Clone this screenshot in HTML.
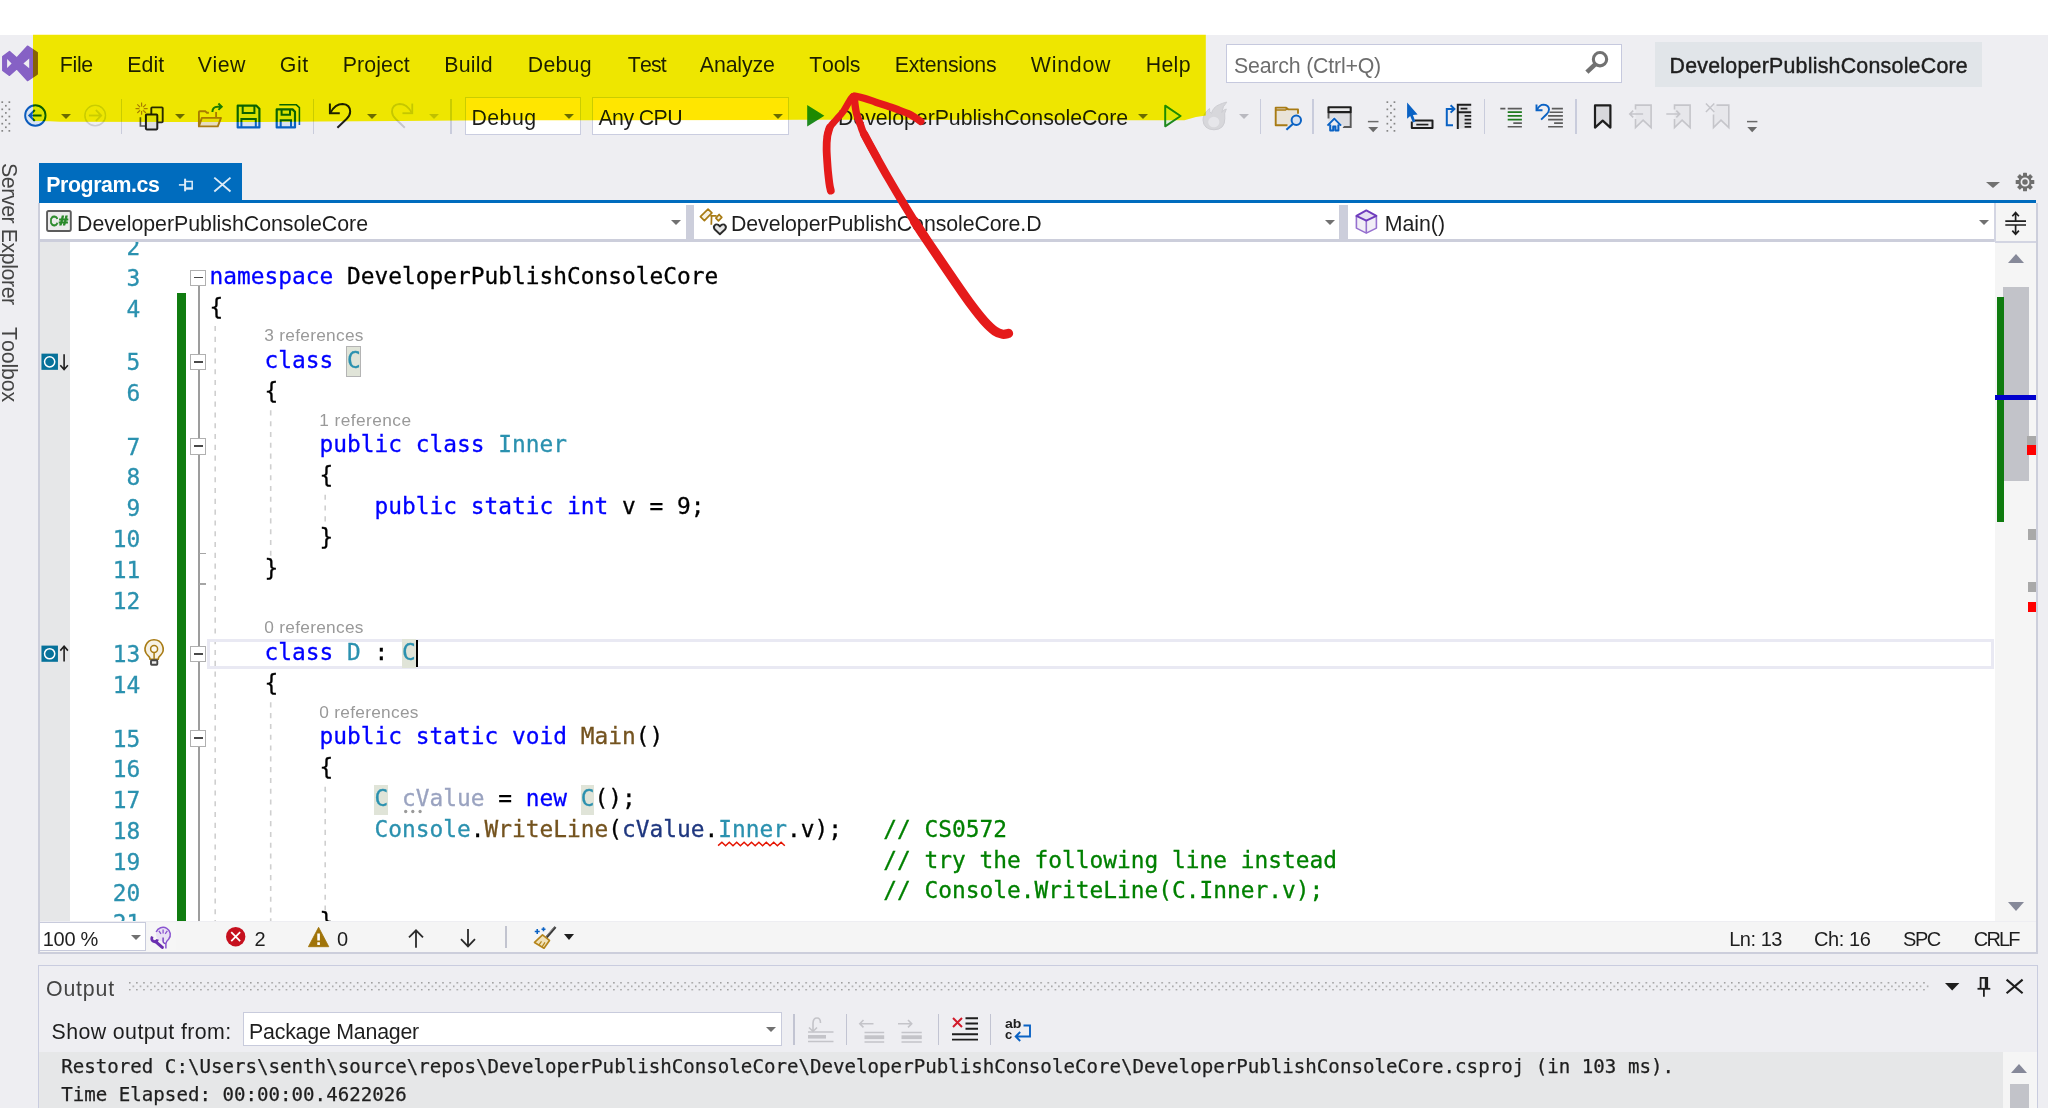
<!DOCTYPE html>
<html lang="en"><head><meta charset="utf-8"><title>Program.cs - DeveloperPublishConsoleCore</title>
<style>
html,body{margin:0;padding:0}
body{width:2048px;height:1108px;position:relative;overflow:hidden;background:#eeeef2;font-family:"Liberation Sans",Arial,sans-serif;font-kerning:none}
.a{position:absolute}
.t{position:absolute;line-height:0;height:0;white-space:pre;font-family:"Liberation Sans",Arial,sans-serif}
svg{position:absolute;overflow:visible}
.sep{position:absolute;width:1.3px;background:#c9cbd6}
.arr{position:absolute;width:0;height:0;border-left:5px solid transparent;border-right:5px solid transparent;border-top:5.5px solid #717171}
.combo{position:absolute;background:#fff;border:1.7px solid #cacde0;box-sizing:border-box}

</style></head>
<body>
<header class="shell">
<div class="a" style="left:0.00px;top:0.00px;width:2048.00px;height:34.70px;background:#fff;"></div>
<div class="a" style="left:0;top:35px;width:2048px;height:58px">
</div>
<svg style="left:0;top:0" width="60" height="100"><path d="M27.5 46.2 L37.2 52.7 V74.1 L27.5 80.5 L16.8 68.7 L9.5 75.3 L2.8 70.4 V56.6 L9.5 51.5 L16.8 58.1 Z" fill="#8661c5" stroke="#8661c5" stroke-width="1.5" stroke-linejoin="round"/><path d="M7.1 58.9 V68 L11.6 63.5 Z M29.2 58.4 L23.4 63.5 L29.2 68.2 Z" fill="#eeeef2"/></svg>
<div class="t" style="left:59.80px;top:64.60px;font-size:21.33px;color:#1e1e1e;letter-spacing:-0.344px;">File</div>
<div class="t" style="left:127.30px;top:64.60px;font-size:21.33px;color:#1e1e1e;letter-spacing:0.059px;">Edit</div>
<div class="t" style="left:197.80px;top:64.60px;font-size:21.33px;color:#1e1e1e;letter-spacing:0.441px;">View</div>
<div class="t" style="left:279.80px;top:64.60px;font-size:21.33px;color:#1e1e1e;letter-spacing:0.578px;">Git</div>
<div class="t" style="left:342.80px;top:64.60px;font-size:21.33px;color:#1e1e1e;letter-spacing:0.087px;">Project</div>
<div class="t" style="left:444.30px;top:64.60px;font-size:21.33px;color:#1e1e1e;letter-spacing:0.212px;">Build</div>
<div class="t" style="left:527.80px;top:64.60px;font-size:21.33px;color:#1e1e1e;letter-spacing:0.228px;">Debug</div>
<div class="t" style="left:627.80px;top:64.60px;font-size:21.33px;color:#1e1e1e;letter-spacing:-0.871px;">Test</div>
<div class="t" style="left:699.80px;top:64.60px;font-size:21.33px;color:#1e1e1e;letter-spacing:-0.127px;">Analyze</div>
<div class="t" style="left:809.30px;top:64.60px;font-size:21.33px;color:#1e1e1e;letter-spacing:-0.231px;">Tools</div>
<div class="t" style="left:894.80px;top:64.60px;font-size:21.33px;color:#1e1e1e;letter-spacing:-0.284px;">Extensions</div>
<div class="t" style="left:1030.80px;top:64.60px;font-size:21.33px;color:#1e1e1e;letter-spacing:0.773px;">Window</div>
<div class="t" style="left:1145.80px;top:64.60px;font-size:21.33px;color:#1e1e1e;letter-spacing:0.281px;">Help</div>
<div class="combo" style="left:1226px;top:44.2px;width:396px;height:39px;border-width:1.3px;border-color:#c6c9de"></div>
<div class="t" style="left:1234.00px;top:65.60px;font-size:21.33px;color:#6d6d6d;letter-spacing:-0.195px;">Search (Ctrl+Q)</div>
<svg style="left:0;top:0" width="2048" height="95"><circle cx="1600" cy="59.2" r="6.65" fill="none" stroke="#717171" stroke-width="3.1"/><path d="M1595.4 64.2 L1586.9 72.2" stroke="#717171" stroke-width="4.6"/></svg>
<div class="a" style="left:1655.00px;top:42.20px;width:326.50px;height:44.40px;background:#e1e5e9;"></div>
<div class="t" style="left:1669.50px;top:65.90px;font-size:21.33px;color:#1e1e1e;letter-spacing:0.253px;-webkit-text-stroke:0.45px #1e1e1e;">DeveloperPublishConsoleCore</div>
<svg style="left:0;top:0" width="2048" height="140"><g fill="#858585"><rect x="1.40" y="101.30" width="1.7" height="1.7"/><rect x="8.50" y="101.30" width="1.7" height="1.7"/><rect x="5.00" y="104.89" width="1.7" height="1.7"/><rect x="1.40" y="108.48" width="1.7" height="1.7"/><rect x="8.50" y="108.48" width="1.7" height="1.7"/><rect x="5.00" y="112.07" width="1.7" height="1.7"/><rect x="1.40" y="115.66" width="1.7" height="1.7"/><rect x="8.50" y="115.66" width="1.7" height="1.7"/><rect x="5.00" y="119.25" width="1.7" height="1.7"/><rect x="1.40" y="122.84" width="1.7" height="1.7"/><rect x="8.50" y="122.84" width="1.7" height="1.7"/><rect x="5.00" y="126.43" width="1.7" height="1.7"/><rect x="1.40" y="130.02" width="1.7" height="1.7"/><rect x="8.50" y="130.02" width="1.7" height="1.7"/></g><circle cx="35.35" cy="115.5" r="10.2" fill="#d9e3f2" stroke="#0a5bbd" stroke-width="1.9"/><path d="M41.6 115.5 H29.6 M34.8 110 L29.3 115.5 L34.8 121" fill="none" stroke="#0a5bbd" stroke-width="2"/><circle cx="95.2" cy="115.5" r="10.3" fill="none" stroke="#cbcbd0" stroke-width="1.6"/><path d="M88.8 115.5 H101 M95.8 110 L101.3 115.5 L95.8 121" fill="none" stroke="#cbcbd0" stroke-width="1.8"/><rect x="151.3" y="107.4" width="11.4" height="15" rx="0.8" fill="#e9e9ec" stroke="#2a2a2a" stroke-width="1.9"/><path d="M140.4 117.2 V126 H145.5" fill="none" stroke="#5a5a5a" stroke-width="1.7"/><rect x="145.9" y="114.4" width="11.4" height="15" rx="0.8" fill="#dedee2" stroke="#1e1e1e" stroke-width="2"/><path d="M141.6 102.6 V114.8 M135.5 108.7 H147.7 M137.3 104.4 L145.9 113 M145.9 104.4 L137.3 113" stroke="#a87b14" stroke-width="1.25"/><circle cx="141.6" cy="108.7" r="2.3" fill="#eee600"/><path d="M198.9 126 V112.2 Q198.9 111.3 199.8 111.3 H205.3 L206.9 112.7 H208.9" fill="none" stroke="#a87b14" stroke-width="1.9"/><path d="M216.1 112 V117.6" fill="none" stroke="#a87b14" stroke-width="1.9"/><path d="M198.9 126.4 L201.8 117.9 H221 L217.8 126.4 Z" fill="#e6dcc0" stroke="#a87b14" stroke-width="1.9" stroke-linejoin="round"/><path d="M212.4 112 Q212.4 106.8 217.5 106.7 H221 M218.4 103.6 L221.7 106.7 L218.4 109.9" fill="none" stroke="#1e7a1e" stroke-width="2"/><path d="M237.7 105.7 H256.4 L259.4 108.7 V127.4 H237.7 Z" fill="#d8e2f1" stroke="#0a62c4" stroke-width="2.2" stroke-linejoin="round"/><path d="M242.7 105.7 V113.1 H254.4 V105.7" fill="none" stroke="#0a62c4" stroke-width="2"/><path d="M241.4 127.4 V118.9 H255.8 V127.4" fill="none" stroke="#0a62c4" stroke-width="2"/><path d="M279.3 104.8 H296.4 L299.4 107.6 V125" fill="none" stroke="#0a62c4" stroke-width="1.6"/><path d="M276.7 109.4 H292.6 L295 111.8 V127.4 H276.7 Z" fill="#d8e2f1" stroke="#0a62c4" stroke-width="2.2" stroke-linejoin="round"/><path d="M281.6 109.4 V114.8 H290 V109.4" fill="none" stroke="#0a62c4" stroke-width="2"/><path d="M280.7 127.4 V120.3 H291 V127.4" fill="none" stroke="#0a62c4" stroke-width="2"/><path d="M329.9 103.5 V113.3 H339.8" fill="none" stroke="#1e1e1e" stroke-width="2"/><path d="M330.6 112.6 Q335 104 342.6 104 Q350.2 104.6 350.2 111.6 Q350.2 115.5 346.5 119 L337.4 127.7" fill="none" stroke="#1e1e1e" stroke-width="2"/><path d="M412.3 103.5 V113.3 H402.4" fill="none" stroke="#c6c6cb" stroke-width="1.9"/><path d="M411.6 112.6 Q407.2 104 399.6 104 Q392 104.6 392 111.6 Q392 115.5 395.7 119 L404.8 127.7" fill="none" stroke="#c6c6cb" stroke-width="1.9"/><path d="M807.2 105 L824.4 115.7 L807.2 126.4 Z" fill="#1e8a1e"/><path d="M1165.2 105.7 L1180.6 116 L1165.2 126.3 Z" fill="#ddeedd" stroke="#1e8a1e" stroke-width="2" stroke-linejoin="round"/><path d="M1219.5 104.5 Q1226.5 101.8 1226.8 102.2 Q1222.5 106 1221.8 112.5 Q1223.5 109.5 1226.3 109 Q1223.8 113 1224.8 118.5 Q1225 129.5 1214 129.8 Q1203.5 129.5 1203 120 Q1203 113.5 1209.5 108.5 Q1209 112.5 1211.5 113.5 Q1212.5 107.5 1219.5 104.5 Z" fill="#d7d7db" stroke="#cdcdd2" stroke-width="1"/><ellipse cx="1213.8" cy="122" rx="5.6" ry="5.2" fill="#e6e6ea"/><path d="M1275.7 107.6 H1286 L1288.2 109.4 H1298 V125.2 H1275.7 Z" fill="#e9e3d8"/><path d="M1287.5 125.2 H1275.7 V107.6 H1285.7 L1288.3 109.4 H1298 V113.8" fill="none" stroke="#a87b14" stroke-width="1.9" stroke-linejoin="round"/><path d="M1276 110 H1285.5 L1287.7 108.4" fill="none" stroke="#a87b14" stroke-width="1.3"/><circle cx="1296.3" cy="120.3" r="4.7" fill="#d8e2f1" stroke="#0a62c4" stroke-width="2"/><path d="M1292.8 123.9 L1286.4 129.8" stroke="#0a62c4" stroke-width="2.1"/><rect x="1328.5" y="107.3" width="22.2" height="19" fill="#dedee2"/><rect x="1328.5" y="107.3" width="22.2" height="4.8" fill="#e8e8ea"/><path d="M1328.5 118.5 V112 M1350.7 112 V127 H1342.8" fill="none" stroke="#5a5a5a" stroke-width="1.9"/><path d="M1328.5 112.1 V107.3 H1350.7 V112.1 Z" fill="none" stroke="#1e1e1e" stroke-width="2.1" stroke-linejoin="round"/><path d="M1326.2 126.2 L1334.3 117.6 L1342.4 126.2 L1340.3 127.5 V131.6 H1328.3 V127.5 Z" fill="#eeeef2" stroke="#eeeef2" stroke-width="2"/><path d="M1330.2 125 V130.4 H1338.4 V125 Z" fill="#d8e2f1"/><path d="M1327.5 125.6 L1334.3 118.6 L1341.1 125.6 M1330.2 124.5 V130.4 H1333.2 V126.6 H1335.4 V130.4 H1338.4 V124.5" fill="none" stroke="#0a62c4" stroke-width="2" stroke-linejoin="round"/><path d="M1367.9 121.6 H1378.5" stroke="#6a6a6a" stroke-width="1.5"/><path d="M1368.2 127 H1378.2 L1373.2 132.3 Z" fill="#6a6a6a"/><g fill="#858585"><rect x="1386.50" y="101.30" width="1.7" height="1.7"/><rect x="1393.60" y="101.30" width="1.7" height="1.7"/><rect x="1390.10" y="104.89" width="1.7" height="1.7"/><rect x="1386.50" y="108.48" width="1.7" height="1.7"/><rect x="1393.60" y="108.48" width="1.7" height="1.7"/><rect x="1390.10" y="112.07" width="1.7" height="1.7"/><rect x="1386.50" y="115.66" width="1.7" height="1.7"/><rect x="1393.60" y="115.66" width="1.7" height="1.7"/><rect x="1390.10" y="119.25" width="1.7" height="1.7"/><rect x="1386.50" y="122.84" width="1.7" height="1.7"/><rect x="1393.60" y="122.84" width="1.7" height="1.7"/><rect x="1390.10" y="126.43" width="1.7" height="1.7"/><rect x="1386.50" y="130.02" width="1.7" height="1.7"/><rect x="1393.60" y="130.02" width="1.7" height="1.7"/></g><path d="M1414.5 120.5 H1432.5 V127.9 H1411.8 V121.5" fill="#e4e4e8" stroke="#1e1e1e" stroke-width="2" stroke-linejoin="round"/><path d="M1416.3 124.6 H1428.4" stroke="#1e1e1e" stroke-width="1.7"/><path d="M1407.1 102.6 L1417.6 114.6 L1412.9 114.9 L1415.4 121.6 L1412.9 122.6 L1410.2 116 L1407.1 118.8 Z" fill="#0a62c4"/><rect x="1459" y="105" width="12.2" height="23.5" fill="#dddde0"/><path d="M1453 125.2 H1446.8 V108.9 H1453.6 M1450.6 105.2 L1454.4 108.9 L1450.6 112.6" fill="none" stroke="#0a62c4" stroke-width="2"/><path d="M1457.8 129 V104.8 H1471.2 M1457.8 112.2 H1471.2" fill="none" stroke="#1e1e1e" stroke-width="2"/><path d="M1460.6 108.6 H1467.4 M1464.6 115.9 H1471.2 M1464.6 119.6 H1471.2 M1464.6 123.3 H1471.2 M1464.6 126.8 H1471.2" stroke="#1e1e1e" stroke-width="1.7"/><path d="M1500.3 108.6 H1505.4 M1507.7 108.6 H1521.9 M1513.3 123.1 H1521.9 M1507.7 126.8 H1521.9" stroke="#5c5c5c" stroke-width="1.6"/><path d="M1507.7 112.2 H1521.9 M1507.7 115.9 H1521.9 M1507.7 119.6 H1521.9" stroke="#1e7a1e" stroke-width="1.7"/><path d="M1551.8 108.6 H1562.9 M1549.5 112.2 H1562.9 M1548.1 115.9 H1562.9 M1548.1 119.6 H1562.9 M1554.1 123.1 H1562.9 M1548.1 126.8 H1562.9" stroke="#5c5c5c" stroke-width="1.6"/><path d="M1536.5 104.4 V110.3 H1542.5" fill="none" stroke="#0a62c4" stroke-width="1.9"/><path d="M1537 109.8 Q1539.5 104.6 1543.6 104.6 Q1549 105 1549 109.6 Q1549 112 1546.6 114.3 L1541.1 119.6" fill="none" stroke="#0a62c4" stroke-width="1.9"/><path d="M1595 105.4 H1610.4 V127.6 L1602.7 120.6 L1595 127.6 Z" fill="#d8d8dc" stroke="#1e1e1e" stroke-width="2.2" stroke-linejoin="round"/><path d="M1635.5 105.1 H1651.1 V127.6 L1643.1 120.2 L1635.5 127.6 Z" fill="#e7e7eb"/><path d="M1635.5 109.4 V105.1 H1651.1 V127.6 L1643.1 120.2 L1635.5 127.6 V119" fill="none" stroke="#c5c5ca" stroke-width="1.6"/><path d="M1643.1 114 H1630 M1633.2 110.6 L1629.8 114 L1633.2 117.4" fill="none" stroke="#c5c5ca" stroke-width="1.6"/><path d="M1674.5 105.1 H1690.1 V127.6 L1682.1 120.2 L1674.5 127.6 Z" fill="#e7e7eb"/><path d="M1674.5 109.4 V105.1 H1690.1 V127.6 L1682.1 120.2 L1674.5 127.6 V119" fill="none" stroke="#c5c5ca" stroke-width="1.6"/><path d="M1666.3 114 H1679.5 M1676.3 110.6 L1679.7 114 L1676.3 117.4" fill="none" stroke="#c5c5ca" stroke-width="1.6"/><path d="M1713.5 105.1 H1728.8 V127.6 L1721 120.2 L1713.5 127.6 Z" fill="#e7e7eb"/><path d="M1716.5 105.1 H1728.8 V127.6 L1721 120.2 L1713.5 127.6 V114.5" fill="none" stroke="#c5c5ca" stroke-width="1.6"/><path d="M1705.9 103.5 L1714.3 112 M1714.3 103.5 L1705.9 112" fill="none" stroke="#c5c5ca" stroke-width="1.5"/><path d="M1747.0 121.6 H1757.4" stroke="#6a6a6a" stroke-width="1.5"/><path d="M1747.3 127 H1757.1 L1752.2 132.3 Z" fill="#6a6a6a"/></svg>
<div class="sep" style="left:120.95px;top:98.90px;height:34.80px;background:#c9ccdc"></div>
<div class="sep" style="left:312.75px;top:98.90px;height:34.80px;background:#c9ccdc"></div>
<div class="sep" style="left:450.25px;top:98.90px;height:34.80px;background:#c9ccdc"></div>
<div class="sep" style="left:1259.65px;top:98.90px;height:34.80px;background:#c9ccdc"></div>
<div class="sep" style="left:1312.25px;top:98.90px;height:34.80px;background:#c9ccdc"></div>
<div class="sep" style="left:1483.65px;top:98.90px;height:34.80px;background:#c9ccdc"></div>
<div class="sep" style="left:1575.25px;top:98.90px;height:34.80px;background:#c9ccdc"></div>
<div class="combo" style="left:464.5px;top:97px;width:116px;height:37.5px"></div>
<div class="t" style="left:471.50px;top:117.60px;font-size:21.33px;color:#1e1e1e;letter-spacing:0.428px;">Debug</div>
<div class="combo" style="left:592px;top:97px;width:197px;height:37.5px"></div>
<div class="t" style="left:598.50px;top:117.60px;font-size:21.33px;color:#1e1e1e;letter-spacing:-0.603px;">Any CPU</div>
<div class="t" style="left:838.00px;top:117.60px;font-size:21.33px;color:#1e1e1e;letter-spacing:-0.061px;">DeveloperPublishConsoleCore</div>
<div class="arr" style="left:61.00px;top:114.10px;border-top-color:#6b6b6b;border-left-width:5.00px;border-right-width:5.00px;border-top-width:5.00px"></div>
<div class="arr" style="left:175.00px;top:114.10px;border-top-color:#6b6b6b;border-left-width:5.00px;border-right-width:5.00px;border-top-width:5.00px"></div>
<div class="arr" style="left:367.30px;top:114.10px;border-top-color:#6b6b6b;border-left-width:5.00px;border-right-width:5.00px;border-top-width:5.00px"></div>
<div class="arr" style="left:429.00px;top:114.10px;border-top-color:#c0c0c6;border-left-width:5.00px;border-right-width:5.00px;border-top-width:5.00px"></div>
<div class="arr" style="left:564.00px;top:114.10px;border-top-color:#6b6b6b;border-left-width:5.00px;border-right-width:5.00px;border-top-width:5.00px"></div>
<div class="arr" style="left:773.00px;top:114.10px;border-top-color:#6b6b6b;border-left-width:5.00px;border-right-width:5.00px;border-top-width:5.00px"></div>
<div class="arr" style="left:1138.00px;top:114.10px;border-top-color:#6b6b6b;border-left-width:5.00px;border-right-width:5.00px;border-top-width:5.00px"></div>
<div class="arr" style="left:1239.00px;top:114.10px;border-top-color:#b9b9c0;border-left-width:5.00px;border-right-width:5.00px;border-top-width:5.00px"></div>
<div class="t" style="left:9.40px;top:-7.40px;font-size:21.33px;color:#444;letter-spacing:-0.425px;top:163.20px;transform-origin:0 0;transform:rotate(90deg);">Server Explorer</div>
<div class="t" style="left:9.40px;top:-7.40px;font-size:21.33px;color:#444;letter-spacing:-0.099px;top:327.30px;transform-origin:0 0;transform:rotate(90deg);">Toolbox</div>
<div class="a" style="left:39.00px;top:163.00px;width:203.00px;height:40.00px;background:#006cbe;"></div>
<div class="a" style="left:39.00px;top:199.50px;width:1996.90px;height:3.80px;background:#006cbe;"></div>
<div class="t" style="left:46.30px;top:184.60px;font-size:21.33px;color:#fff;letter-spacing:-0.416px;font-weight:700;">Program.cs</div>
<svg style="left:0;top:0" width="300" height="210"><g fill="none" stroke="#dcebf7"><path d="M178.9 184.9 H185" stroke-width="1.6"/><path d="M185.1 178.7 V191.3" stroke-width="2"/><path d="M185.5 181.5 H192.2 V188.4 H185.5" stroke-width="1.5"/><path d="M185.5 188.5 H192.9" stroke-width="2.3"/><path d="M214.3 177.6 L230.5 191.5 M230.5 177.6 L214.3 191.5" stroke-width="1.9"/></g></svg>
<div class="arr" style="left:1985.70px;top:182.00px;border-top-color:#717171;border-left-width:7.25px;border-right-width:7.25px;border-top-width:6.60px"></div>
<svg style="left:2025.2px;top:181.9px" width="1" height="1" viewBox="0 0 1 1"><rect x="-2" y="-9.3" width="4" height="4.5" rx="0.6" transform="rotate(0)" fill="#6e6e6e"/><rect x="-2" y="-9.3" width="4" height="4.5" rx="0.6" transform="rotate(45)" fill="#6e6e6e"/><rect x="-2" y="-9.3" width="4" height="4.5" rx="0.6" transform="rotate(90)" fill="#6e6e6e"/><rect x="-2" y="-9.3" width="4" height="4.5" rx="0.6" transform="rotate(135)" fill="#6e6e6e"/><rect x="-2" y="-9.3" width="4" height="4.5" rx="0.6" transform="rotate(180)" fill="#6e6e6e"/><rect x="-2" y="-9.3" width="4" height="4.5" rx="0.6" transform="rotate(225)" fill="#6e6e6e"/><rect x="-2" y="-9.3" width="4" height="4.5" rx="0.6" transform="rotate(270)" fill="#6e6e6e"/><rect x="-2" y="-9.3" width="4" height="4.5" rx="0.6" transform="rotate(315)" fill="#6e6e6e"/><circle r="6.7" fill="#6e6e6e"/><circle r="3.6" fill="none" stroke="#eeeef2" stroke-width="1.7"/></svg>
<div class="a" style="left:37.50px;top:203.30px;width:2000.50px;height:38.60px;background:#cccedb;"></div>
<div class="a" style="left:39.80px;top:203.30px;width:1953.80px;height:35.60px;background:#fff;"></div>
<div class="a" style="left:685.50px;top:204.60px;width:8.30px;height:34.30px;background:#cccedb;"></div>
<div class="a" style="left:1339.10px;top:204.60px;width:8.50px;height:34.30px;background:#cccedb;"></div>
<div class="a" style="left:1993.60px;top:203.30px;width:44.40px;height:39.60px;background:#d3d5e2;"></div>
<div class="a" style="left:1996.40px;top:203.30px;width:40.10px;height:37.90px;background:#f5f5f5;"></div>
<svg style="left:0;top:0" width="2048" height="245"><rect x="47.05" y="210.95" width="23.75" height="20" rx="1.6" fill="#ebebeb" stroke="#5c5c5c" stroke-width="1.9"/><text x="49.7" y="226.2" font-family="Liberation Sans, Arial, sans-serif" font-size="14.4" fill="#2a8a2a" stroke="#2a8a2a" stroke-width="0.8" textLength="8.4" lengthAdjust="spacingAndGlyphs">C</text><text x="59" y="224.5" font-family="Liberation Sans, Arial, sans-serif" font-weight="700" font-size="13" fill="#2a8a2a" stroke="#2a8a2a" stroke-width="0.9" textLength="9" lengthAdjust="spacingAndGlyphs">#</text><path d="M708.05 209.2 L711.9 212.9 L704.4 220.6 L700.4 216.7 Z" fill="#f6f1e2" stroke="#a87b14" stroke-width="1.7" stroke-linejoin="round"/><path d="M710.3 215.8 H716.6 M711.6 215.8 L711.3 224.8" fill="none" stroke="#a87b14" stroke-width="1.7"/><path d="M719.1 214.5 L721.8 217.4 L718.5 220.8 L715.9 218.1 Z" fill="#f6f1e2" stroke="#a87b14" stroke-width="1.7" stroke-linejoin="round"/><path d="M719.9 234.2 L714.6 229.3 Q712.8 226.3 715.3 224.7 Q717.9 223.6 719.9 226.4 Q721.9 223.6 724.5 224.7 Q727 226.3 725.2 229.3 Z" fill="#e6e6e6" stroke="#2b2b2b" stroke-width="1.9" stroke-linejoin="round"/><path d="M1366.3 210.4 L1376.4 215.8 L1366.3 220.6 L1356.4 215.8 Z" fill="#e6dff2"/><path d="M1356.4 215.8 L1366.3 220.6 L1376.4 215.8 V228.1 L1366.3 233.1 L1356.4 228.1 Z" fill="#f1eef6"/><path d="M1356.4 215.8 V228.1 L1366.3 233.1 L1376.4 228.1 V215.8 M1366.3 220.6 V233.1" fill="none" stroke="#9670cf" stroke-width="1.6" stroke-linejoin="round"/><path d="M1366.3 210.4 L1376.4 215.8 L1366.3 220.6 L1356.4 215.8 Z" fill="none" stroke="#6f3cbd" stroke-width="1.9" stroke-linejoin="round"/></svg>
<div class="t" style="left:77.00px;top:223.60px;font-size:21.33px;color:#1e1e1e;letter-spacing:-0.024px;">DeveloperPublishConsoleCore</div>
<div class="arr" style="left:671.00px;top:220.00px;border-top-color:#717171;border-left-width:5.00px;border-right-width:5.00px;border-top-width:5.50px"></div>
<div class="t" style="left:731.00px;top:223.60px;font-size:21.33px;color:#1e1e1e;letter-spacing:-0.086px;">DeveloperPublishConsoleCore.D</div>
<div class="arr" style="left:1325.00px;top:220.00px;border-top-color:#717171;border-left-width:5.00px;border-right-width:5.00px;border-top-width:5.50px"></div>
<div class="t" style="left:1384.70px;top:223.60px;font-size:21.33px;color:#1e1e1e;letter-spacing:-0.023px;">Main()</div>
<div class="arr" style="left:1979.00px;top:220.00px;border-top-color:#717171;border-left-width:5.00px;border-right-width:5.00px;border-top-width:5.50px"></div>
<svg style="left:0;top:0" width="2048" height="245"><g fill="none" stroke="#1e1e1e" stroke-width="1.7"><path d="M2005.3 221.1 H2026 M2005.3 225 H2026"/><path d="M2015.6 221 V212.8 M2012.3 216.2 L2015.6 212.6 L2018.9 216.2 M2015.6 225 V234 M2012.3 230.6 L2015.6 234.2 L2018.9 230.6"/></g></svg>
</header>
<main class="doc">
<div class="a" style="left:37.50px;top:241.00px;width:2.00px;height:712.75px;background:#cccedb;"></div>
<div class="a" style="left:2036.00px;top:203.00px;width:2.00px;height:750.75px;background:#cccedb;"></div>
<div class="a" id="editor" style="left:39.50px;top:241.90px;width:1955.00px;height:679.60px;background:#fff;overflow:hidden">
<div class="a" style="left:-39.50px;top:-241.90px;width:2048px;height:1108px">
<div class="a" style="left:39.50px;top:241.00px;width:30.00px;height:681.00px;background:#e6e7e8;"></div>
<div class="a" style="left:176.70px;top:292.50px;width:9.20px;height:629.50px;background:#107c10;"></div>
<div class="t" style="left:126.45px;top:247.07px;font-size:22.84px;color:#2b91af;font-family:'DejaVu Sans Mono', 'Liberation Mono', monospace;-webkit-text-stroke:0.3px;">2</div>
<div class="t" style="left:126.45px;top:277.89px;font-size:22.84px;color:#2b91af;font-family:'DejaVu Sans Mono', 'Liberation Mono', monospace;-webkit-text-stroke:0.3px;">3</div>
<div class="t" style="left:126.45px;top:308.71px;font-size:22.84px;color:#2b91af;font-family:'DejaVu Sans Mono', 'Liberation Mono', monospace;-webkit-text-stroke:0.3px;">4</div>
<div class="t" style="left:126.45px;top:362.23px;font-size:22.84px;color:#2b91af;font-family:'DejaVu Sans Mono', 'Liberation Mono', monospace;-webkit-text-stroke:0.3px;">5</div>
<div class="t" style="left:126.45px;top:393.05px;font-size:22.84px;color:#2b91af;font-family:'DejaVu Sans Mono', 'Liberation Mono', monospace;-webkit-text-stroke:0.3px;">6</div>
<div class="t" style="left:126.45px;top:446.57px;font-size:22.84px;color:#2b91af;font-family:'DejaVu Sans Mono', 'Liberation Mono', monospace;-webkit-text-stroke:0.3px;">7</div>
<div class="t" style="left:126.45px;top:477.39px;font-size:22.84px;color:#2b91af;font-family:'DejaVu Sans Mono', 'Liberation Mono', monospace;-webkit-text-stroke:0.3px;">8</div>
<div class="t" style="left:126.45px;top:508.21px;font-size:22.84px;color:#2b91af;font-family:'DejaVu Sans Mono', 'Liberation Mono', monospace;-webkit-text-stroke:0.3px;">9</div>
<div class="t" style="left:112.70px;top:539.03px;font-size:22.84px;color:#2b91af;font-family:'DejaVu Sans Mono', 'Liberation Mono', monospace;-webkit-text-stroke:0.3px;">10</div>
<div class="t" style="left:112.70px;top:569.85px;font-size:22.84px;color:#2b91af;font-family:'DejaVu Sans Mono', 'Liberation Mono', monospace;-webkit-text-stroke:0.3px;">11</div>
<div class="t" style="left:112.70px;top:600.67px;font-size:22.84px;color:#2b91af;font-family:'DejaVu Sans Mono', 'Liberation Mono', monospace;-webkit-text-stroke:0.3px;">12</div>
<div class="t" style="left:112.70px;top:654.19px;font-size:22.84px;color:#2b91af;font-family:'DejaVu Sans Mono', 'Liberation Mono', monospace;-webkit-text-stroke:0.3px;">13</div>
<div class="t" style="left:112.70px;top:685.01px;font-size:22.84px;color:#2b91af;font-family:'DejaVu Sans Mono', 'Liberation Mono', monospace;-webkit-text-stroke:0.3px;">14</div>
<div class="t" style="left:112.70px;top:738.53px;font-size:22.84px;color:#2b91af;font-family:'DejaVu Sans Mono', 'Liberation Mono', monospace;-webkit-text-stroke:0.3px;">15</div>
<div class="t" style="left:112.70px;top:769.35px;font-size:22.84px;color:#2b91af;font-family:'DejaVu Sans Mono', 'Liberation Mono', monospace;-webkit-text-stroke:0.3px;">16</div>
<div class="t" style="left:112.70px;top:800.17px;font-size:22.84px;color:#2b91af;font-family:'DejaVu Sans Mono', 'Liberation Mono', monospace;-webkit-text-stroke:0.3px;">17</div>
<div class="t" style="left:112.70px;top:830.99px;font-size:22.84px;color:#2b91af;font-family:'DejaVu Sans Mono', 'Liberation Mono', monospace;-webkit-text-stroke:0.3px;">18</div>
<div class="t" style="left:112.70px;top:861.81px;font-size:22.84px;color:#2b91af;font-family:'DejaVu Sans Mono', 'Liberation Mono', monospace;-webkit-text-stroke:0.3px;">19</div>
<div class="t" style="left:112.70px;top:892.63px;font-size:22.84px;color:#2b91af;font-family:'DejaVu Sans Mono', 'Liberation Mono', monospace;-webkit-text-stroke:0.3px;">20</div>
<div class="t" style="left:112.70px;top:923.45px;font-size:22.84px;color:#2b91af;font-family:'DejaVu Sans Mono', 'Liberation Mono', monospace;-webkit-text-stroke:0.3px;">21</div>
<div class="a" style="left:198.15px;top:285.60px;width:1.50px;height:636.40px;background:#9d9d9d;"></div>
<div class="a" style="left:190.3px;top:269.50px;width:16.2px;height:16.4px;box-sizing:border-box;border:1.4px solid #b0b0b0;background:#fff"></div>
<div class="a" style="left:194.20px;top:276.70px;width:8.80px;height:1.70px;background:#4a4a4a;"></div>
<div class="a" style="left:190.3px;top:353.84px;width:16.2px;height:16.4px;box-sizing:border-box;border:1.4px solid #b0b0b0;background:#fff"></div>
<div class="a" style="left:194.20px;top:361.04px;width:8.80px;height:1.70px;background:#4a4a4a;"></div>
<div class="a" style="left:190.3px;top:438.18px;width:16.2px;height:16.4px;box-sizing:border-box;border:1.4px solid #b0b0b0;background:#fff"></div>
<div class="a" style="left:194.20px;top:445.38px;width:8.80px;height:1.70px;background:#4a4a4a;"></div>
<div class="a" style="left:190.3px;top:645.80px;width:16.2px;height:16.4px;box-sizing:border-box;border:1.4px solid #b0b0b0;background:#fff"></div>
<div class="a" style="left:194.20px;top:653.00px;width:8.80px;height:1.70px;background:#4a4a4a;"></div>
<div class="a" style="left:190.3px;top:730.14px;width:16.2px;height:16.4px;box-sizing:border-box;border:1.4px solid #b0b0b0;background:#fff"></div>
<div class="a" style="left:194.20px;top:737.34px;width:8.80px;height:1.70px;background:#4a4a4a;"></div>
<div class="a" style="left:198.90px;top:552.54px;width:7.60px;height:1.40px;background:#a5a5a5;"></div>
<div class="a" style="left:198.90px;top:583.36px;width:7.60px;height:1.40px;background:#a5a5a5;"></div>
<div class="a" style="left:198.90px;top:936.96px;width:7.60px;height:1.40px;background:#a5a5a5;"></div>
<svg style="left:0;top:0" width="2048" height="1108"><path d="M215.20 326.02 V925.00" stroke="#cfcfcf" stroke-width="1.6" stroke-dasharray="5.1 5.7" fill="none"/></svg>
<svg style="left:0;top:0" width="2048" height="1108"><path d="M270.70 410.36 V556.56" stroke="#cfcfcf" stroke-width="1.6" stroke-dasharray="5.1 5.7" fill="none"/></svg>
<svg style="left:0;top:0" width="2048" height="1108"><path d="M270.70 702.32 V925.00" stroke="#cfcfcf" stroke-width="1.6" stroke-dasharray="5.1 5.7" fill="none"/></svg>
<svg style="left:0;top:0" width="2048" height="1108"><path d="M325.20 494.70 V525.74" stroke="#cfcfcf" stroke-width="1.6" stroke-dasharray="5.1 5.7" fill="none"/></svg>
<svg style="left:0;top:0" width="2048" height="1108"><path d="M325.20 786.66 V910.16" stroke="#cfcfcf" stroke-width="1.6" stroke-dasharray="5.1 5.7" fill="none"/></svg>
<div class="a" style="left:206.6px;top:638.5px;width:1787.70px;height:30.3px;box-sizing:border-box;border:3.2px solid #e9e9f3"></div>
<div class="a" style="left:346.30px;top:346.34px;width:14.95px;height:31px;box-sizing:border-box;background:#e0e4d8;border:1.3px solid #b4b4b4"></div>
<div class="a" style="left:401.90px;top:638.90px;width:13.75px;height:29.50px;background:#e0e4d8;"></div>
<div class="a" style="left:374.40px;top:784.88px;width:13.75px;height:29.80px;background:#e0e4d8;"></div>
<div class="a" style="left:580.65px;top:784.88px;width:13.75px;height:29.80px;background:#e0e4d8;"></div>
<div class="t" style="left:209.60px;top:275.69px;font-size:22.84px;color:#000;letter-spacing:0.006px;font-family:'DejaVu Sans Mono', 'Liberation Mono', monospace;-webkit-text-stroke:0.3px;"><span style="color:#0000ff">namespace</span> DeveloperPublishConsoleCore</div>
<div class="t" style="left:209.60px;top:306.51px;font-size:22.84px;color:#000;letter-spacing:0.000px;font-family:'DejaVu Sans Mono', 'Liberation Mono', monospace;-webkit-text-stroke:0.3px;">{</div>
<div class="t" style="left:264.60px;top:360.03px;font-size:22.84px;color:#000;letter-spacing:0.004px;font-family:'DejaVu Sans Mono', 'Liberation Mono', monospace;-webkit-text-stroke:0.3px;"><span style="color:#0000ff">class</span> <span style="color:#2b91af">C</span></div>
<div class="t" style="left:264.60px;top:390.85px;font-size:22.84px;color:#000;letter-spacing:0.000px;font-family:'DejaVu Sans Mono', 'Liberation Mono', monospace;-webkit-text-stroke:0.3px;">{</div>
<div class="t" style="left:319.60px;top:444.37px;font-size:22.84px;color:#000;letter-spacing:0.005px;font-family:'DejaVu Sans Mono', 'Liberation Mono', monospace;-webkit-text-stroke:0.3px;"><span style="color:#0000ff">public</span> <span style="color:#0000ff">class</span> <span style="color:#2b91af">Inner</span></div>
<div class="t" style="left:319.60px;top:475.19px;font-size:22.84px;color:#000;letter-spacing:0.000px;font-family:'DejaVu Sans Mono', 'Liberation Mono', monospace;-webkit-text-stroke:0.3px;">{</div>
<div class="t" style="left:374.60px;top:506.01px;font-size:22.84px;color:#000;letter-spacing:0.005px;font-family:'DejaVu Sans Mono', 'Liberation Mono', monospace;-webkit-text-stroke:0.3px;"><span style="color:#0000ff">public</span> <span style="color:#0000ff">static</span> <span style="color:#0000ff">int</span> v = 9;</div>
<div class="t" style="left:319.60px;top:536.83px;font-size:22.84px;color:#000;letter-spacing:0.000px;font-family:'DejaVu Sans Mono', 'Liberation Mono', monospace;-webkit-text-stroke:0.3px;">}</div>
<div class="t" style="left:264.60px;top:567.65px;font-size:22.84px;color:#000;letter-spacing:0.000px;font-family:'DejaVu Sans Mono', 'Liberation Mono', monospace;-webkit-text-stroke:0.3px;">}</div>
<div class="t" style="left:264.60px;top:651.99px;font-size:22.84px;color:#000;letter-spacing:0.004px;font-family:'DejaVu Sans Mono', 'Liberation Mono', monospace;-webkit-text-stroke:0.3px;"><span style="color:#0000ff">class</span> <span style="color:#2b91af">D</span> : <span style="color:#2b91af">C</span></div>
<div class="t" style="left:264.60px;top:682.81px;font-size:22.84px;color:#000;letter-spacing:0.000px;font-family:'DejaVu Sans Mono', 'Liberation Mono', monospace;-webkit-text-stroke:0.3px;">{</div>
<div class="t" style="left:319.60px;top:736.33px;font-size:22.84px;color:#000;letter-spacing:0.004px;font-family:'DejaVu Sans Mono', 'Liberation Mono', monospace;-webkit-text-stroke:0.3px;"><span style="color:#0000ff">public</span> <span style="color:#0000ff">static</span> <span style="color:#0000ff">void</span> <span style="color:#74531f">Main</span>()</div>
<div class="t" style="left:319.60px;top:767.15px;font-size:22.84px;color:#000;letter-spacing:0.000px;font-family:'DejaVu Sans Mono', 'Liberation Mono', monospace;-webkit-text-stroke:0.3px;">{</div>
<div class="t" style="left:374.60px;top:797.97px;font-size:22.84px;color:#000;letter-spacing:0.004px;font-family:'DejaVu Sans Mono', 'Liberation Mono', monospace;-webkit-text-stroke:0.3px;"><span style="color:#2b91af">C</span> <span style="color:#9aa3c0">cValue</span> = <span style="color:#0000ff">new</span> <span style="color:#2b91af">C</span>();</div>
<div class="t" style="left:374.60px;top:828.79px;font-size:22.84px;color:#000;letter-spacing:0.005px;font-family:'DejaVu Sans Mono', 'Liberation Mono', monospace;-webkit-text-stroke:0.3px;"><span style="color:#2b91af">Console</span>.<span style="color:#74531f">WriteLine</span>(<span style="color:#1f377f">cValue</span>.<span style="color:#2b91af">Inner</span>.v);   <span style="color:#008000">// CS0572</span></div>
<div class="t" style="left:883.35px;top:859.61px;font-size:22.84px;color:#000;letter-spacing:0.006px;font-family:'DejaVu Sans Mono', 'Liberation Mono', monospace;-webkit-text-stroke:0.3px;"><span style="color:#008000">// try the following line instead</span></div>
<div class="t" style="left:883.35px;top:890.43px;font-size:22.84px;color:#000;letter-spacing:0.006px;font-family:'DejaVu Sans Mono', 'Liberation Mono', monospace;-webkit-text-stroke:0.3px;"><span style="color:#008000">// Console.WriteLine(C.Inner.v);</span></div>
<div class="t" style="left:319.60px;top:921.25px;font-size:22.84px;color:#000;letter-spacing:0.000px;font-family:'DejaVu Sans Mono', 'Liberation Mono', monospace;-webkit-text-stroke:0.3px;">}</div>
<div class="t" style="left:264.30px;top:335.34px;font-size:17.30px;color:#999999;letter-spacing:0.278px;">3 references</div>
<div class="t" style="left:319.30px;top:419.68px;font-size:17.30px;color:#999999;letter-spacing:0.434px;">1 reference</div>
<div class="t" style="left:264.30px;top:627.30px;font-size:17.30px;color:#999999;letter-spacing:0.278px;">0 references</div>
<div class="t" style="left:319.30px;top:711.64px;font-size:17.30px;color:#999999;letter-spacing:0.278px;">0 references</div>
<div class="a" style="left:416.30px;top:639.50px;width:2.00px;height:27.50px;background:#000;"></div>
<svg style="left:0;top:0" width="2048" height="1108"><path d="M718.1 845.6 L721.9 842.3 L725.6 845.7 L729.3 842.3 L733.0 845.7 L736.7 842.3 L740.4 845.7 L744.1 842.3 L747.8 845.7 L751.5 842.3 L755.2 845.7 L758.9 842.3 L762.6 845.7 L766.3 842.3 L770.0 845.7 L773.7 842.3 L777.4 845.7 L781.1 842.3 L784.8 845.7" fill="none" stroke="#e51400" stroke-width="1.5"/></svg>
<svg style="left:0;top:0" width="2048" height="1108"><g fill="#9a9a9a"><circle cx="405.7" cy="811.48" r="1.65"/><circle cx="412.8" cy="811.48" r="1.65"/><circle cx="420.1" cy="811.48" r="1.65"/></g></svg>
<svg style="left:0;top:0" width="100" height="1108"><rect x="41.45" y="353.64" width="16.5" height="16.2" fill="#06729a"/><circle cx="49.65" cy="361.79" r="5.1" fill="none" stroke="#fff" stroke-width="1.5"/><path d="M64.1 354.24 V369.24 M60.3 365.24 L64.1 369.44 L67.9 365.24" fill="none" stroke="#1e1e1e" stroke-width="1.6"/></svg>
<svg style="left:0;top:0" width="100" height="1108"><rect x="41.45" y="645.60" width="16.5" height="16.2" fill="#06729a"/><circle cx="49.65" cy="653.75" r="5.1" fill="none" stroke="#fff" stroke-width="1.5"/><path d="M64.1 661.60 V646.40 M60.3 650.60 L64.1 646.30 L67.9 650.60" fill="none" stroke="#1e1e1e" stroke-width="1.6"/></svg>
<svg style="left:0;top:0" width="300" height="1108"><path d="M154 639.8 A9.1 9.1 0 0 1 160.6 655.2 Q158.2 657.4 158.2 659.3 H150.1 Q150.1 657.4 147.6 655.2 A9.1 9.1 0 0 1 154 639.8 Z" fill="#f6f1e4" stroke="#a87b14" stroke-width="1.6"/><circle cx="154.1" cy="648.9" r="3.5" fill="#fbf8f0" stroke="#a87b14" stroke-width="1.5"/><path d="M154.1 652.4 V659" stroke="#a87b14" stroke-width="1.5"/><rect x="151" y="660.2" width="6.3" height="4.5" rx="0.7" fill="#eeeeee" stroke="#484848" stroke-width="1.9"/></svg>
</div></div>
<div class="a" style="left:1994.50px;top:242.90px;width:41.50px;height:678.60px;background:#f5f5f5;"></div>
<div class="a" style="left:2002.50px;top:287.00px;width:26.50px;height:194.00px;background:#c2c3c9;"></div>
<div class="a" style="left:1996.80px;top:297.00px;width:7.20px;height:224.70px;background:#0f7b0f;"></div>
<div class="a" style="left:1994.50px;top:395.40px;width:41.50px;height:4.30px;background:#0000cd;"></div>
<div class="a" style="left:2027.40px;top:436.00px;width:8.60px;height:8.50px;background:#a9a9a9;"></div>
<div class="a" style="left:2027.40px;top:444.50px;width:8.60px;height:10.80px;background:#ff0000;"></div>
<div class="a" style="left:2027.80px;top:529.00px;width:8.20px;height:10.70px;background:#a9a9a9;"></div>
<div class="a" style="left:2027.80px;top:582.00px;width:8.20px;height:10.00px;background:#a9a9a9;"></div>
<div class="a" style="left:2027.80px;top:601.70px;width:8.20px;height:10.30px;background:#ff0000;"></div>
<div class="arr" style="left:2007.6px;top:254px;border-top:none;border-bottom:9px solid #868999;border-left-width:8.2px;border-right-width:8.2px"></div>
<div class="arr" style="left:2008.00px;top:901.80px;border-top-color:#868999;border-left-width:8.20px;border-right-width:8.20px;border-top-width:9.00px"></div>
<div class="a" style="left:39.50px;top:921.50px;width:1996.50px;height:30.00px;background:#f5f5f5;"></div>
<div class="a" style="left:37.50px;top:951.50px;width:2000.50px;height:2.25px;background:#cccedb;"></div>
<div class="combo" style="left:39px;top:922px;width:107px;height:28.8px;border-color:#c8cbdc"></div>
<div class="t" style="left:42.80px;top:939.27px;font-size:20.00px;color:#1e1e1e;letter-spacing:-0.304px;">100 %</div>
<div class="arr" style="left:131.00px;top:935.00px;border-top-color:#717171;border-left-width:5.00px;border-right-width:5.00px;border-top-width:5.60px"></div>
<div class="a" style="left:148.50px;top:923.20px;width:27.50px;height:27.10px;background:#f6f6f6;"></div>
<svg style="left:0;top:0" width="300" height="960"><circle cx="163.1" cy="934.4" r="7.1" fill="#e9e2f4"/><path d="M156.2 932 A7.3 7.3 0 1 1 168.6 939.3 Q166 941.5 165.9 943.6 V948.4" fill="none" stroke="#8a55d0" stroke-width="1.5"/><path d="M163.1 933.4 V929.6 M161 933.8 L158.9 930.9 M165.2 933.8 L167.3 930.9" fill="none" stroke="#8a55d0" stroke-width="1.3"/><path d="M163.1 937.4 V941.2 Q163.3 943.3 165.6 943.6" fill="none" stroke="#7a45c4" stroke-width="1.5"/><path d="M152.2 936.5 Q150.6 940 153.6 941.6 Q156.6 942.5 157.6 939.3" fill="none" stroke="#6a2fb0" stroke-width="2.6"/><path d="M155.3 941.4 L162.3 947.4" fill="none" stroke="#6a2fb0" stroke-width="3.1" stroke-linecap="round"/></svg>
<svg style="left:225.80px;top:926.50px" width="19.40" height="19.40" viewBox="0 0 20 20"><circle cx="10" cy="10" r="10" fill="#c6101e"/><path d="M5.4 5.4 L14.6 14.6 M14.6 5.4 L5.4 14.6" stroke="#fff" stroke-width="1.8"/></svg>
<div class="t" style="left:254.60px;top:939.27px;font-size:20.00px;color:#1e1e1e;letter-spacing:0.275px;">2</div>
<svg style="left:307.80px;top:927.30px" width="21.20" height="20.00" viewBox="0 0 21.2 20"><path d="M10.6 0.3 L20.8 19.7 H0.4 Z" fill="#a0740a" stroke="#a0740a" stroke-width="0.8" stroke-linejoin="round"/><path d="M10.6 6.5 V13.5 M10.6 15.3 V18" stroke="#fff" stroke-width="2.6"/></svg>
<div class="t" style="left:337.00px;top:939.27px;font-size:20.00px;color:#1e1e1e;letter-spacing:1.375px;">0</div>
<svg style="left:407.80px;top:928.50px" width="16.00" height="18.70" viewBox="0 0 16 18.7"><path d="M8 18.7 V1.5 M1 8.5 L8 1.3 L15 8.5" fill="none" stroke="#2b2b2b" stroke-width="1.8"/></svg>
<svg style="left:460.00px;top:928.50px" width="16.00" height="18.70" viewBox="0 0 16 18.7"><path d="M8 0 V17.2 M1 10.2 L8 17.4 L15 10.2" fill="none" stroke="#2b2b2b" stroke-width="1.8"/></svg>
<div class="sep" style="left:505.35px;top:925.60px;height:22.80px;background:#c2c4cf"></div>
<svg style="left:532.80px;top:925.60px" width="23.70" height="22.90" viewBox="0 0 23.7 23"><path d="M22.5 1 L13.5 11.5" stroke="#3a3a3a" stroke-width="2.6"/><path d="M21.8 0.5 L12.8 11" stroke="#8a8a8a" stroke-width="1"/><path d="M9.5 9 L16.5 14.5 L11 22.3 L1.5 16.5 Z" fill="#f1e2b8" stroke="#b5851b" stroke-width="1.7" stroke-linejoin="round"/><path d="M6 19 L8.5 15.5 M9 21 L12 16.5" stroke="#b5851b" stroke-width="1.2"/><path d="M4.2 3 V8 M1.7 5.5 H6.7 M10.5 1.3 V5.3 M8.5 3.3 H12.5" stroke="#0a62c4" stroke-width="1.6"/></svg>
<div class="arr" style="left:564.00px;top:933.80px;border-top-color:#1e1e1e;border-left-width:5.80px;border-right-width:5.80px;border-top-width:6.80px"></div>
<div class="t" style="left:1729.20px;top:939.47px;font-size:20.00px;color:#1e1e1e;letter-spacing:-0.468px;">Ln: 13</div>
<div class="t" style="left:1814.00px;top:939.47px;font-size:20.00px;color:#1e1e1e;letter-spacing:-0.423px;">Ch: 16</div>
<div class="t" style="left:1903.00px;top:939.47px;font-size:20.00px;color:#1e1e1e;letter-spacing:-1.442px;">SPC</div>
<div class="t" style="left:1973.80px;top:939.47px;font-size:20.00px;color:#1e1e1e;letter-spacing:-1.834px;">CRLF</div>
</main>
<section class="toolwin">
<div class="a" style="left:37.50px;top:964.70px;width:2000.70px;height:143.30px;background:#c9ccdf;"></div>
<div class="a" style="left:39.30px;top:966.10px;width:1997.60px;height:141.90px;background:#eeeef2;"></div>
<div class="t" style="left:46.00px;top:988.80px;font-size:21.33px;color:#444;letter-spacing:0.828px;">Output</div>
<svg style="left:128.6px;top:982px" width="1800.4" height="8.6"><defs><pattern id="gp" width="7.12" height="7.1" patternUnits="userSpaceOnUse"><rect x="0" y="0" width="1.5" height="1.5" fill="#9a9a9a"/><rect x="3.56" y="3.55" width="1.5" height="1.5" fill="#9a9a9a"/></pattern></defs><rect width="1800.4" height="8.6" fill="url(#gp)"/></svg>
<svg style="left:0;top:0" width="2048" height="1000"><path d="M1945 983 H1959.4 L1952.2 990.6 Z" fill="#1e1e1e"/><path d="M1980.6 988 V977.9 H1987.2 V988" fill="none" stroke="#1e1e1e" stroke-width="1.8"/><path d="M1986 977.9 V988" stroke="#1e1e1e" stroke-width="2.4"/><path d="M1977.5 988.8 H1990.3" stroke="#1e1e1e" stroke-width="1.8"/><path d="M1983.9 989 V996.7" stroke="#1e1e1e" stroke-width="1.8"/><path d="M2006.6 979.6 L2022.6 993.3 M2022.6 979.6 L2006.6 993.3" stroke="#1e1e1e" stroke-width="2.1"/></svg>
<div class="t" style="left:51.50px;top:1031.80px;font-size:21.33px;color:#1e1e1e;letter-spacing:0.412px;">Show output from:</div>
<div class="combo" style="left:242.5px;top:1011.8px;width:539.8px;height:34.5px;border-color:#c8cbdc"></div>
<div class="t" style="left:249.00px;top:1031.80px;font-size:21.33px;color:#1e1e1e;letter-spacing:-0.207px;">Package Manager</div>
<div class="arr" style="left:765.60px;top:1027.00px;border-top-color:#717171;border-left-width:5.20px;border-right-width:5.20px;border-top-width:5.80px"></div>
<div class="sep" style="left:793.35px;top:1014.00px;height:30.70px;background:#c2c4d2"></div>
<div class="sep" style="left:846.05px;top:1014.00px;height:30.70px;background:#c2c4d2"></div>
<div class="sep" style="left:937.65px;top:1014.00px;height:30.70px;background:#c2c4d2"></div>
<div class="sep" style="left:990.05px;top:1014.00px;height:30.70px;background:#c2c4d2"></div>
<svg style="left:808.00px;top:1017.30px" width="25.50" height="25.20" viewBox="0 0 25.5 25.2"><path d="M5 14 V6 Q5.2 1 9 1 Q12.5 1 12.5 6 M1 10.5 L5 14.5 L9 10.5" fill="none" stroke="#c4c4c9" stroke-width="1.6"/><path d="M0 15 H25.5 M0 24.5 H25.5" stroke="#c4c4c9" stroke-width="1.3"/><rect x="0" y="18" width="18" height="3.6" fill="#c4c4c9"/></svg>
<svg style="left:859.30px;top:1019.80px" width="25.20" height="22.70" viewBox="0 0 25.2 22.7"><path d="M14.5 3.7 H0.8 M4.5 0 L0.8 3.7 L4.5 7.4" fill="none" stroke="#c4c4c9" stroke-width="1.6"/><path d="M5.5 12.5 H25.2 M5.5 22 H25.2" stroke="#c4c4c9" stroke-width="1.3"/><rect x="5.5" y="15.3" width="19.7" height="3.8" fill="#c4c4c9"/></svg>
<svg style="left:897.70px;top:1019.80px" width="23.80" height="22.70" viewBox="0 0 23.8 22.7"><path d="M0 3.7 H13.7 M10 0 L13.7 3.7 L10 7.4" fill="none" stroke="#c4c4c9" stroke-width="1.6"/><path d="M3.5 12.5 H23.8 M3.5 22 H23.8" stroke="#c4c4c9" stroke-width="1.3"/><rect x="3.5" y="15.3" width="20.3" height="3.8" fill="#c4c4c9"/></svg>
<svg style="left:952.20px;top:1016.80px" width="26.00" height="23.70" viewBox="0 0 26 23.7"><path d="M1 1 L10 10 M10 1 L1 10" stroke="#d11a2a" stroke-width="2"/><path d="M13.5 1.3 H26 M13.5 6.5 H26 M13.5 11.7 H26 M0 17.3 H26 M0 22.6 H26" stroke="#1e1e1e" stroke-width="1.9"/></svg>
<svg style="left:1004.60px;top:1017.60px" width="26.00" height="23.40" viewBox="0 0 26 23.4"><text x="0" y="9.6" font-family="Liberation Sans, Arial, sans-serif" font-weight="700" font-size="13" fill="#1e1e1e" textLength="16.5" lengthAdjust="spacingAndGlyphs">ab</text><text x="0" y="21.2" font-family="Liberation Sans, Arial, sans-serif" font-weight="700" font-size="13" fill="#1e1e1e">c</text><path d="M18.5 7.5 H25 V18.5 H11 M15.2 14 L10.7 18.5 L15.2 23" fill="none" stroke="#0a62c4" stroke-width="1.9"/></svg>
<div class="a" style="left:39.30px;top:1052.20px;width:1963.30px;height:55.80px;background:#e6e7e8;"></div>
<div class="t" style="left:61.20px;top:1066.88px;font-size:19.12px;color:#1e1e1e;letter-spacing:0.015px;font-family:'DejaVu Sans Mono', 'Liberation Mono', monospace;-webkit-text-stroke:0.25px;">Restored C:\Users\senth\source\repos\DeveloperPublishConsoleCore\DeveloperPublishConsoleCore\DeveloperPublishConsoleCore.csproj (in 103 ms).</div>
<div class="t" style="left:61.20px;top:1094.98px;font-size:19.12px;color:#1e1e1e;letter-spacing:0.015px;font-family:'DejaVu Sans Mono', 'Liberation Mono', monospace;-webkit-text-stroke:0.25px;">Time Elapsed: 00:00:00.4622026</div>
<div class="a" style="left:2002.60px;top:1052.20px;width:34.30px;height:55.80px;background:#f5f5f5;"></div>
<div class="arr" style="left:2011.3px;top:1063.5px;border-top:none;border-bottom:9.4px solid #868999;border-left-width:8.25px;border-right-width:8.25px"></div>
<div class="a" style="left:2009.90px;top:1083.60px;width:19.30px;height:24.40px;background:#c2c3c9;"></div>
</section>
<div class="annot">
<svg style="left:0;top:0;mix-blend-mode:darken" width="2048" height="1108"><path d="M33 34.7 H1205.8 V115.5 L1196 117 L1184.4 120.2 L1100 120.2 L900 119.8 L800 119.8 L620 120.3 L460 120.4 L400 120.9 L320 121.5 L260 122 L185 122 L60 121.8 L50 121.2 L33 120.9 Z" fill="#ffe600"/></svg>
<svg style="left:0;top:0" width="2048" height="1108"><g fill="none" stroke="#e51a1a" stroke-linecap="round" stroke-linejoin="round"><path d="M854.0 96.4 C854.4 99.1 855.2 107.7 856.3 112.5 C857.4 117.3 859.4 121.9 860.7 125.5 C862.0 129.1 861.6 129.1 864.1 134.2 C866.6 139.2 873.8 152.2 875.8 155.8" stroke-width="7.4"/><path d="M864.1 134.2 C866.0 137.8 871.8 148.6 875.8 155.8 C879.8 163.0 883.8 170.3 888.0 177.5 C892.2 184.7 896.4 191.9 900.8 199.2 C905.2 206.5 910.1 214.5 914.5 221.4 C918.9 228.3 924.9 237.3 927.0 240.5" stroke-width="8.2"/><path d="M914.5 221.4 C916.6 224.6 920.0 230.1 927.0 240.5 C934.0 250.9 949.0 272.9 956.5 283.8 C964.0 294.7 967.4 299.6 972.0 305.8 C976.6 312.0 980.5 316.9 984.3 321.1 C988.1 325.3 991.9 328.9 995.0 331.1 C998.1 333.3 1000.5 333.8 1002.7 334.2 C1005.0 334.6 1007.5 333.5 1008.5 333.4" stroke-width="9.3"/><path d="M853.6 96.4 C853.1 96.8 852.6 96.1 850.9 98.6 C849.2 101.1 845.8 107.8 843.3 111.4 C840.8 115.0 838.1 117.4 835.8 120.1 C833.5 122.8 831.0 125.0 829.6 127.7 C828.2 130.4 827.7 134.9 827.3 136.3" stroke-width="6.8"/><path d="M829.6 127.7 C829.2 129.1 827.8 132.7 827.3 136.3 C826.8 139.9 826.5 144.2 826.6 149.3 C826.7 154.4 827.2 161.1 827.6 166.7 C828.0 172.3 828.8 178.9 829.3 182.9 C829.8 186.9 830.5 189.3 830.8 190.6" stroke-width="7.8"/><path d="M853.6 96.4 C854.0 96.4 854.4 96.0 856.3 96.3 C858.2 96.6 861.8 97.4 865.0 98.4 C868.2 99.4 872.2 101.0 875.8 102.2 C879.4 103.4 883.1 104.5 886.7 105.7 C890.3 106.9 893.9 108.2 897.5 109.5 C901.1 110.8 905.4 112.3 908.3 113.6 C911.2 114.9 912.7 116.1 914.8 117.4 C916.9 118.7 919.8 120.8 920.8 121.5" stroke-width="7.3"/></g></svg>
</div>
</body></html>
